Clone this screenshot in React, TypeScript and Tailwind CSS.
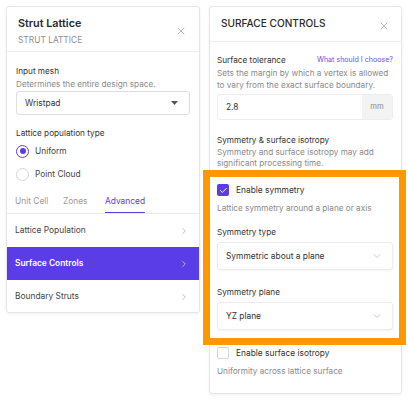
import { X, ChevronRight, ChevronDown, Check } from "lucide-react";

const font = { fontFamily: "Inter, 'Liberation Sans', sans-serif" };

function Caret() {
  return (
    <svg width="7" height="4" viewBox="0 0 7 4">
      <path d="M0 0 L7 0 L3.5 4 Z" fill="#555" />
    </svg>
  );
}

function NavRow({ label, active, h }: { label: string; active?: boolean; h: string }) {
  return (
    <div
      className={
        "shrink-0 flex items-center justify-between pl-[8px] pr-[10px] " +
        h +
        (active ? " bg-[#5a3de6] text-white font-semibold" : " text-[#444]")
      }
    >
      <span className="text-[8.4px]">{label}</span>
      <ChevronRight size={10} strokeWidth={1.4} className={active ? "text-white" : "text-[#9a9a9a]"} />
    </div>
  );
}

function Select({ value }: { value: string }) {
  return (
    <div className="flex items-center justify-between h-[28px] rounded-[3px] border border-[#ededed] bg-white pl-[8px] pr-[9px] shadow-[0_1px_2px_rgba(0,0,0,0.05)]">
      <span className="text-[8.4px] text-[#333]">{value}</span>
      <ChevronDown size={12} strokeWidth={1.1} className="text-[#a0a0a0]" />
    </div>
  );
}

export default function App() {
  return (
    <div className="w-[408px] h-[400px] bg-white flex items-start pt-[6px] pl-[6px] gap-[9px]" style={font}>
      {/* Left panel */}
      <div className="w-[194px] h-[307px] border border-[#e6e6e6] rounded-[3px] shadow-[0_1px_3px_rgba(0,0,0,0.06)] flex flex-col overflow-hidden">
        <div className="shrink-0 flex items-center justify-between h-[45px] pl-[11px] pr-[12px] pt-[3px] border-b border-[#ececec]">
          <div className="flex flex-col">
            <span className="text-[10.8px] font-semibold text-[#2a2a2a] leading-[15px]">Strut Lattice</span>
            <span className="text-[8.4px] text-[#8e8e8e] leading-[12px] mt-[3px]">STRUT LATTICE</span>
          </div>
          <X size={12} strokeWidth={1.2} className="text-[#888]" />
        </div>
        <div className="shrink-0 px-[9px] pt-[13px]">
          <div className="text-[8.2px] text-[#333] leading-[13px]">Input mesh</div>
          <div className="text-[8.2px] text-[#8a8a8a] leading-[12px]">Determines the entire design space.</div>
          <div className="mt-[1px] flex items-center justify-between h-[24px] rounded-[3px] border border-[#dedede] pl-[8px] pr-[11px]">
            <span className="text-[8.4px] text-[#333]">Wristpad</span>
            <Caret />
          </div>
          <div className="mt-[12px] text-[8.2px] text-[#333] leading-[12px]">Lattice population type</div>
          <div className="mt-[5px] flex items-center gap-[6px] h-[14px]">
            <span className="w-[13px] h-[13px] rounded-full border-[1.5px] border-[#5a3de6] flex items-center justify-center">
              <span className="w-[6px] h-[6px] rounded-full bg-[#5a3de6]" />
            </span>
            <span className="text-[8.4px] text-[#444]">Uniform</span>
          </div>
          <div className="mt-[9px] flex items-center gap-[6px] h-[14px]">
            <span className="w-[13px] h-[13px] rounded-full border border-[#d6d6d6]" />
            <span className="text-[8.4px] text-[#444]">Point Cloud</span>
          </div>
        </div>
        <div className="shrink-0 mt-[14px] flex items-end px-[8px] h-[19px] border-b border-[#ececec]">
          <span className="text-[8.4px] text-[#9a9a9a] pb-[5px] w-[48px]">Unit Cell</span>
          <span className="text-[8.4px] text-[#9a9a9a] pb-[5px] w-[42px]">Zones</span>
          <span className="text-[8.4px] text-[#5a3de6] pb-[4px] border-b border-[#5a3de6]">Advanced</span>
        </div>
        <NavRow label="Lattice Population" h="h-[33px]" />
        <NavRow label="Surface Controls" active h="h-[33px]" />
        <NavRow label="Boundary Struts" h="h-[33px]" />
      </div>

      {/* Right panel */}
      <div className="relative w-[193px] h-[388px] border border-[#e6e6e6] rounded-[3px] shadow-[0_1px_3px_rgba(0,0,0,0.06)] flex flex-col">
        <div className="shrink-0 flex items-center justify-between h-[35px] pl-[11px] pr-[11px] border-b border-[#ececec]">
          <span className="text-[10.1px] font-medium text-[#2a2a2a] mt-[-1px]">SURFACE CONTROLS</span>
          <X size={12} strokeWidth={1.2} className="text-[#888] mt-[3px]" />
        </div>
        <div className="px-[7px] pr-[8px] pt-[12px]">
          <div className="flex items-center justify-between h-[13px]">
            <span className="text-[8.2px] text-[#333]">Surface tolerance</span>
            <span className="text-[7.1px] text-[#6a4ff0]">What should I choose?</span>
          </div>
          <div className="text-[8.2px] text-[#8a8a8a] leading-[12px]">
            Sets the margin by which a vertex is allowed to vary from the exact surface boundary.
          </div>
          <div className="mt-[3px] flex h-[26px] rounded-[3px] border border-[#ededed] overflow-hidden">
            <span className="flex-1 flex items-center pl-[8px] text-[8.4px] text-[#333]">2.8</span>
            <span className="w-[30px] bg-[#f3f3f3] flex items-center justify-center text-[7.6px] text-[#888]">mm</span>
          </div>
          <div className="mt-[14px] text-[8.2px] text-[#333] leading-[13px]">Symmetry &amp; surface isotropy</div>
          <div className="text-[8.2px] text-[#8a8a8a] leading-[11px]">
            Symmetry and surface isotropy may add significant processing time.
          </div>

          <div className="mt-[14px] flex items-center gap-[7px] h-[14px]">
            <span className="w-[12px] h-[12px] rounded-[2px] bg-[#5a3de6] flex items-center justify-center">
              <Check size={9} strokeWidth={2.5} className="text-white" />
            </span>
            <span className="text-[8.4px] text-[#333]">Enable symmetry</span>
          </div>
          <div className="mt-[5px] text-[8.2px] text-[#8a8a8a] leading-[13px]">Lattice symmetry around a plane or axis</div>
          <div className="mt-[11px] text-[8.2px] text-[#333] leading-[13px]">Symmetry type</div>
          <div className="mt-[3px]">
            <Select value="Symmetric about a plane" />
          </div>
          <div className="mt-[16px] text-[8.2px] text-[#333] leading-[13px]">Symmetry plane</div>
          <div className="mt-[3px]">
            <Select value="YZ plane" />
          </div>

          <div className="mt-[16px] flex items-center gap-[7px] h-[14px]">
            <span className="w-[12px] h-[12px] rounded-[2px] border border-[#d6d6d6]" />
            <span className="text-[8.4px] text-[#333]">Enable surface isotropy</span>
          </div>
          <div className="mt-[5px] text-[8.2px] text-[#8a8a8a] leading-[13px]">Uniformity across lattice surface</div>
        </div>

        {/* highlight annotation */}
        <div className="pointer-events-none absolute left-[-7px] top-[163px] w-[203px] h-[175px] border-[7px] border-[#ff9800]" />
      </div>
    </div>
  );
}
